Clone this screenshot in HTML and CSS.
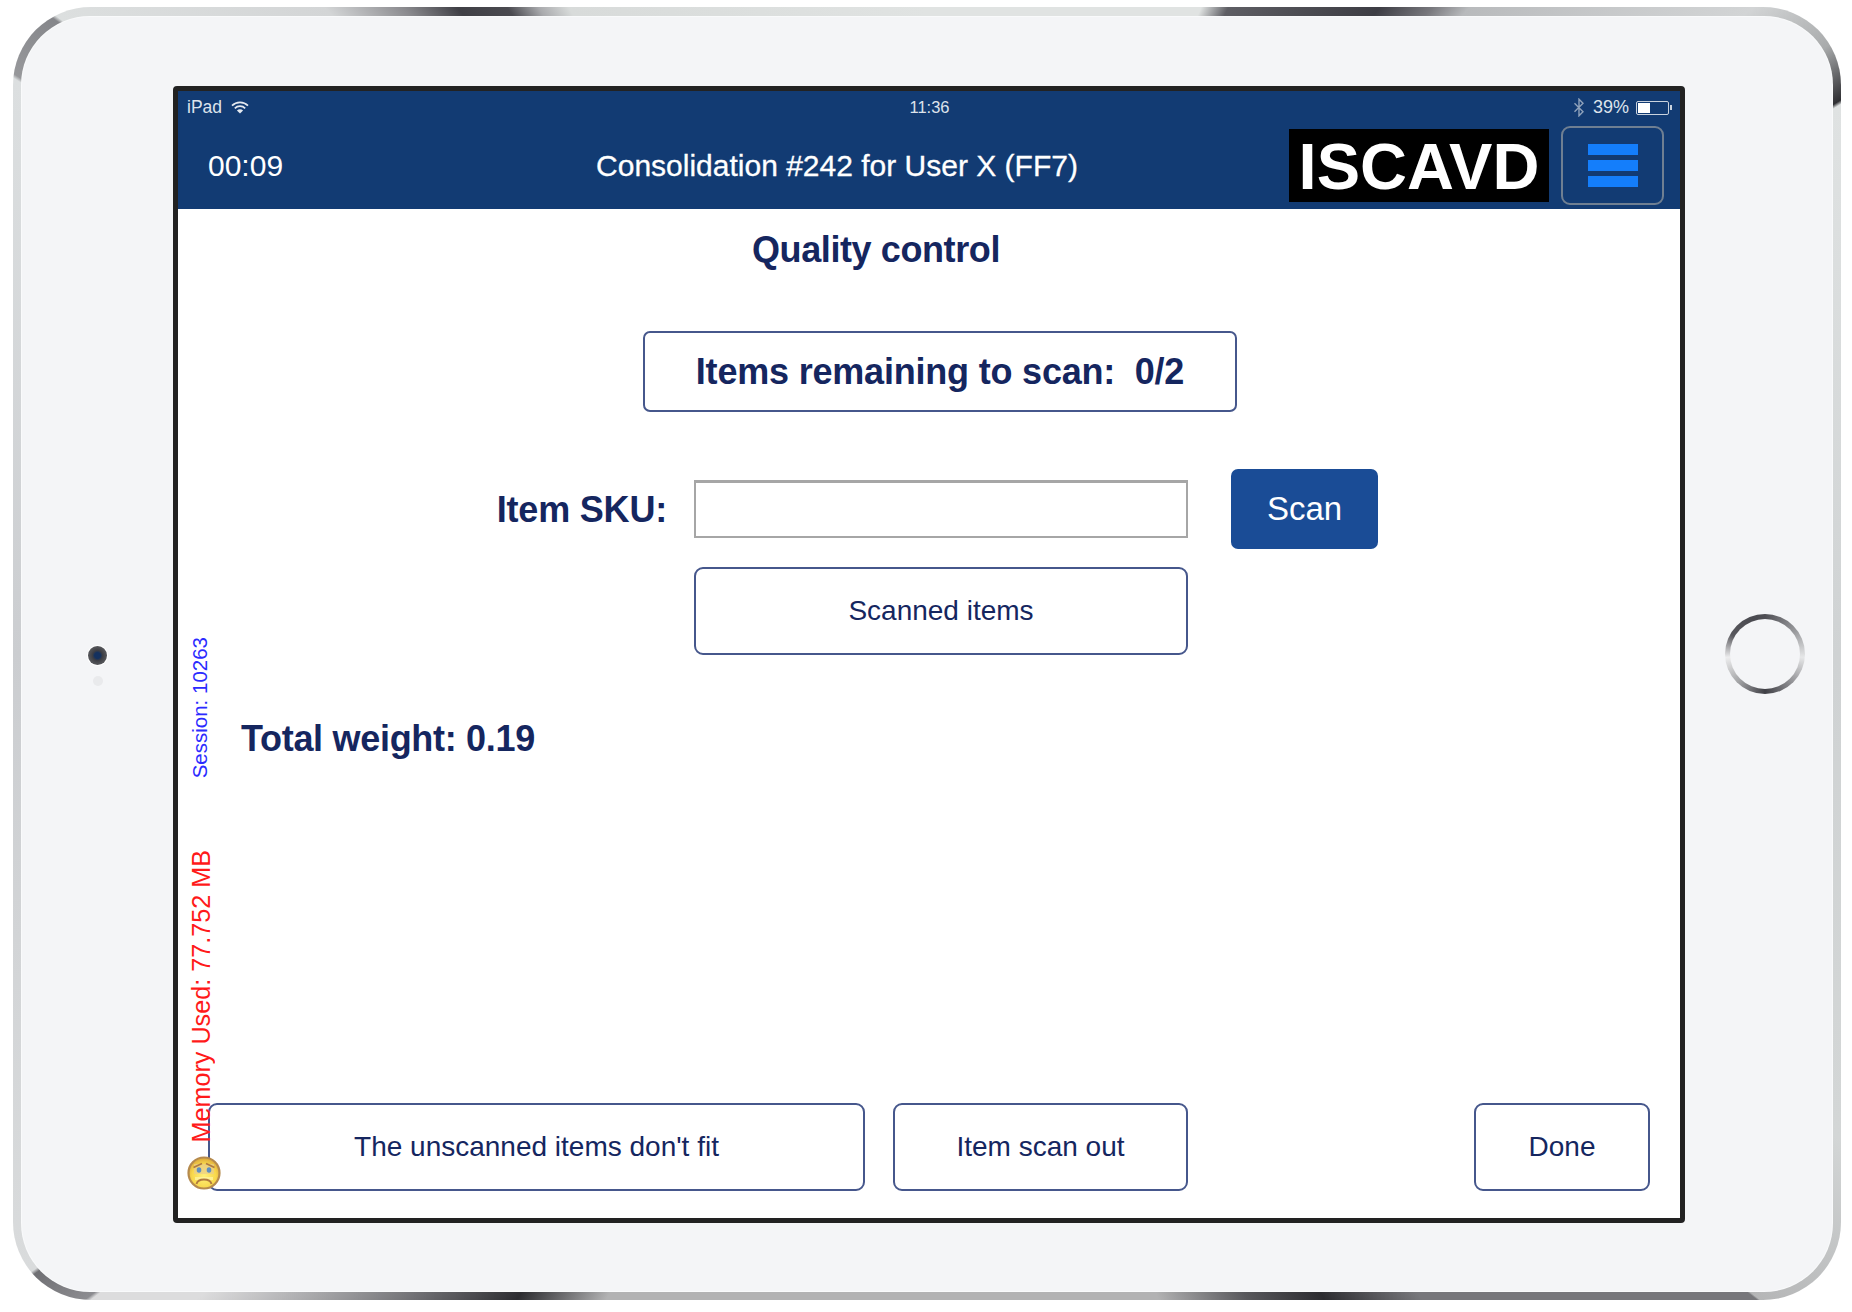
FILE: index.html
```html
<!DOCTYPE html>
<html lang="en">
<head>
    <meta charset="UTF-8">
    <title>Quality control</title>
    <link rel="stylesheet" href="styles.css">
</head>
<body>
    <div class="device">
        <div class="bezel">
            <div class="side side-left">
                <div class="camera"></div>
                <div class="sensor"></div>
            </div>

            <div class="screen">
                <header class="top">
                    <div class="status">
                        <div class="status-left">
                            <span>iPad</span>
                            <svg class="wifi" viewBox="0 0 18 13" width="18" height="13">
                                <path d="M1 4.600a11.300 11.300 0 0 1 16 0" fill="none" stroke="#e4e9f0" stroke-width="1.700"/>
                                <path d="M3.800 7.300a7.300 7.300 0 0 1 10.400 0" fill="none" stroke="#e4e9f0" stroke-width="1.700"/>
                                <path d="M9 12.600L5.900 9.600a4.400 4.400 0 0 1 6.200 0z" fill="#e4e9f0"/>
                            </svg>
                        </div>
                        <div class="status-time">11:36</div>
                        <div class="status-right">
                            <svg class="bt" viewBox="0 0 12 19" width="12" height="19">
                                <path d="M1.500 5.300l8.500 8.400-4 4.100V1.200l4 4.100-8.500 8.400" fill="none" stroke="#8fa2bb" stroke-width="1.400"/>
                            </svg>
                            <span>39%</span>
                            <div class="battery"><div class="battery-level"></div></div>
                            <div class="battery-tip"></div>
                        </div>
                    </div>
                    <div class="navbar">
                        <div class="timer">00:09</div>
                        <div class="nav-title">Consolidation #242 for User X (FF7)</div>
                        <div class="logo">ISCAVD</div>
                        <button class="menu-btn">
                            <span></span><span></span><span></span>
                        </button>
                    </div>
                </header>

                <main class="content">
                    <h1>Quality control</h1>
                    <div class="remaining">Items remaining to scan:&nbsp; 0/2</div>

                    <div class="sku-row">
                        <label for="sku">Item SKU:</label>
                        <input type="text" id="sku">
                        <button class="btn-scan">Scan</button>
                    </div>
                    <div class="scanned-row">
                        <button class="btn">Scanned items</button>
                    </div>

                    <div class="weight">Total weight: 0.19</div>

                    <div class="actions">
                        <button class="btn btn-unscanned">The unscanned items don't fit</button>
                        <button class="btn btn-scanout">Item scan out</button>
                        <button class="btn btn-done">Done</button>
                    </div>

                    <!-- debug overlays sit on top of the page -->
                    <div class="debug debug-session">Session: 10263</div>
                    <div class="debug debug-memory">Memory Used: 77.752 MB</div>
                    <svg class="smiley" viewBox="0 0 34 34" width="34" height="34">
                        <defs>
                            <radialGradient id="face" cx="50%" cy="60%" r="55%">
                                <stop offset="0" stop-color="#fff07a"/>
                                <stop offset="0.7" stop-color="#f8d84c"/>
                                <stop offset="1" stop-color="#e2b03c"/>
                            </radialGradient>
                        </defs>
                        <circle cx="17" cy="17" r="15.500" fill="url(#face)" stroke="#b58a4e" stroke-width="2.200"/>
                        <path d="M7 8h20v10H7z" fill="#e9cf8c" opacity="0.7"/>
                        <path d="M6.500 11.500L15 7.500M27.500 11.500L19 7.500" stroke="#b07a3e" stroke-width="1.700" fill="none"/>
                        <ellipse cx="12" cy="14" rx="2.300" ry="2.800" fill="#5f8fc0"/>
                        <ellipse cx="22" cy="14" rx="2.300" ry="2.800" fill="#5f8fc0"/>
                        <path d="M8 21h18v3H8z" fill="#fff6a8" opacity="0.7"/>
                        <path d="M9.500 28c1.500-6 13.500-6 15 0" fill="none" stroke="#b07a3e" stroke-width="1.900"/>
                    </svg>
                </main>
            </div>

            <div class="side side-right">
                <div class="home"></div>
            </div>
        </div>
    </div>
</body>
</html>
```

FILE: styles.css
```css
body {
    margin: 0;
    height: 1312px;
    overflow: hidden;
    background: #ffffff;
    font-family: "Liberation Sans", Arial, sans-serif;
    color: #15265f;
}

/* metal edge: conic stops are angles round the centre of the device */
.device {
    margin: 7px 11px 12px 13px;
    height: 1293px;
    padding: 10px 9px 9px 9px;
    box-sizing: border-box;
    border-radius: 78px;
    background: conic-gradient(from 0deg at 50% 50%,
        #e0e3e2 0deg,
        #e0e3e2 23deg,
        #5e5e64 25deg,
        #4a4a50 31deg,
        #3d3d44 35deg,
        #77777c 38deg,
        #b8babc 40deg,
        #d2d4d5 52deg,
        #a9abac 56deg,
        #2f2f33 58.800deg,
        #dfe2e2 59deg,
        #cfd2d3 90deg,
        #d3d6d6 118deg,
        #b5b6b7 127.800deg,
        #77777b 127.900deg,
        #77777b 142.500deg,
        #2c2c30 148.400deg,
        #58585c 153.600deg,
        #b2b2b3 160.300deg,
        #b2b2b3 206.400deg,
        #2c2c30 212.400deg,
        #6c6c70 218.200deg,
        #dcdcdd 228.500deg,
        #dcdcdd 232.300deg,
        #8c8c90 232.500deg,
        #6f6f73 235.200deg,
        #d9dbdc 235.400deg,
        #cbcdd0 270deg,
        #dcdfe0 302.200deg,
        #97989b 302.400deg,
        #85868a 306deg,
        #dcdfdf 306.200deg,
        #d3d5d6 317deg,
        #8a8a8e 321deg,
        #3f3f45 324deg,
        #4a4a50 327deg,
        #a9aaad 329deg,
        #d8dbda 331deg,
        #e0e3e2 360deg);
}

.bezel {
    display: flex;
    align-items: center;
    height: 100%;
    border-radius: 68px;
    background: #f4f5f7;
    box-shadow: 0 0 0 1px #f9fafb;
}

.side {
    display: flex;
    flex-direction: column;
    align-items: center;
}

.side-left {
    flex: 0 0 151px;
    margin-top: 24px;
}

.side-right {
    flex: 1;
    padding-left: 12px;
}

.camera {
    width: 19px;
    height: 19px;
    border-radius: 50%;
    background: radial-gradient(circle, #14315f 0 3px, #3d3e44 5px, #55565a 9px);
    box-shadow: 0 0 0 1px #ffffff;
}

.sensor {
    width: 10px;
    height: 10px;
    margin-top: 11px;
    border-radius: 50%;
    background: #e9eaec;
}

.home {
    width: 80px;
    height: 80px;
    box-sizing: border-box;
    border-radius: 50%;
    padding: 5px;
    background: conic-gradient(#4e4e54 0deg, #9c9da0 55deg, #e6e7e8 95deg, #8a8a8e 140deg, #3f3f45 180deg, #a5a6a8 225deg, #ededee 265deg, #57575c 300deg, #4a4a50 340deg, #4e4e54 360deg);
}

.home:before {
    content: '';
    display: block;
    width: 100%;
    height: 100%;
    border-radius: 50%;
    background: #f4f5f7;
}

/* screen */
.screen {
    width: 1502px;
    height: 1127px;
    flex-shrink: 0;
    display: flex;
    flex-direction: column;
    border: 5px solid #222222;
    border-radius: 4px;
    background: #ffffff;
}

.top {
    height: 118px;
    background: #123b73;
    color: #ffffff;
}

.status {
    display: grid;
    grid-template-columns: 1fr 1fr 1fr;
    align-items: center;
    height: 32px;
    box-sizing: border-box;
    padding: 2px 8px 0 9px;
    font-size: 17.500px;
    color: #dde3ec;
}

.status-left {
    display: flex;
    align-items: center;
    gap: 9px;
}

.status-time {
    text-align: center;
    font-size: 16.500px;
}

.status-right {
    display: flex;
    align-items: center;
    justify-content: flex-end;
}

.status-right span {
    margin: 0 7px 0 8px;
    font-size: 18px;
}

.battery {
    width: 33px;
    height: 14px;
    box-sizing: border-box;
    border: 1px solid #c9d2de;
    border-radius: 2px;
    padding: 1px;
}

.battery-level {
    width: 12px;
    height: 100%;
    background: #ffffff;
}

.battery-tip {
    width: 2px;
    height: 5px;
    margin-left: 1px;
    background: #c9d2de;
}

.navbar {
    display: flex;
    align-items: center;
    height: 86px;
    padding: 0 16px 0 30px;
}

.timer {
    width: 300px;
    font-size: 30px;
}

.nav-title {
    width: 658px;
    text-align: center;
    font-size: 30px;
    -webkit-text-stroke: 0.3px #ffffff;
    white-space: nowrap;
}

.logo {
    width: 260px;
    height: 73px;
    margin-left: auto;
    margin-right: 12px;
    text-align: center;
    background: #000000;
    font-size: 65px;
    font-weight: bold;
    line-height: 75px;
}

.menu-btn {
    width: 103px;
    height: 79px;
    display: flex;
    flex-direction: column;
    align-items: center;
    justify-content: center;
    gap: 5px;
    padding: 0;
    background: none;
    border: 2px solid #6f7f92;
    border-radius: 9px;
}

.menu-btn span {
    width: 50px;
    height: 11px;
    background: #147efb;
}

/* page content */
.content {
    position: relative;
    flex: 1;
    display: flex;
    flex-direction: column;
}

.content h1 {
    margin: 17px 0 0 0;
    padding-right: 106px;
    text-align: center;
    font-size: 36px;
    letter-spacing: -0.4px;
    line-height: 48px;
}

.remaining {
    width: 594px;
    height: 81px;
    box-sizing: border-box;
    margin: 57px 0 0 465px;
    padding-top: 2px;
    display: flex;
    align-items: center;
    justify-content: center;
    border: 2px solid #46578c;
    border-radius: 7px;
    font-size: 36px;
    letter-spacing: -0.2px;
    font-weight: bold;
}

.sku-row {
    display: flex;
    align-items: center;
    margin-top: 57px;
}

.sku-row label {
    width: 489px;
    padding-top: 2px;
    text-align: right;
    font-size: 36px;
    letter-spacing: -0.2px;
    font-weight: bold;
}

.sku-row input {
    width: 494px;
    height: 58px;
    box-sizing: border-box;
    margin-left: 27px;
    border: 2px solid #a6a6a6;
    border-top-width: 3px;
    background: #ffffff;
}

.btn-scan {
    width: 147px;
    height: 80px;
    margin-left: 43px;
    padding-top: 2px;
    border: none;
    border-radius: 7px;
    background: #1a4c96;
    color: #ffffff;
    font-family: inherit;
    font-size: 33px;
}

.scanned-row {
    margin: 18px 0 0 516px;
}

.btn {
    height: 88px;
    box-sizing: border-box;
    border: 2px solid #46578c;
    border-radius: 9px;
    background: #ffffff;
    color: #15265f;
    font-family: inherit;
    font-size: 28px;
}

.scanned-row .btn {
    width: 494px;
}

.weight {
    margin: 62px 0 0 63px;
    font-size: 36px;
    letter-spacing: -0.3px;
    font-weight: bold;
    line-height: 44px;
}

.actions {
    display: flex;
    margin-top: auto;
    padding: 0 30px 27px 30px;
}

.btn-unscanned {
    width: 657px;
}

.btn-scanout {
    width: 295px;
    margin-left: 28px;
}

.btn-done {
    width: 176px;
    margin-left: auto;
}

.debug {
    position: absolute;
    left: 10px;
    writing-mode: vertical-rl;
    transform: rotate(180deg);
    white-space: nowrap;
}

.debug-session {
    top: 428px;
    font-size: 20.500px;
    color: #2b2bff;
}

.debug-memory {
    top: 641px;
    left: 9px;
    font-size: 25.200px;
    color: #ff1a1a;
}

.smiley {
    position: absolute;
    left: 9px;
    top: 947px;
}
```
